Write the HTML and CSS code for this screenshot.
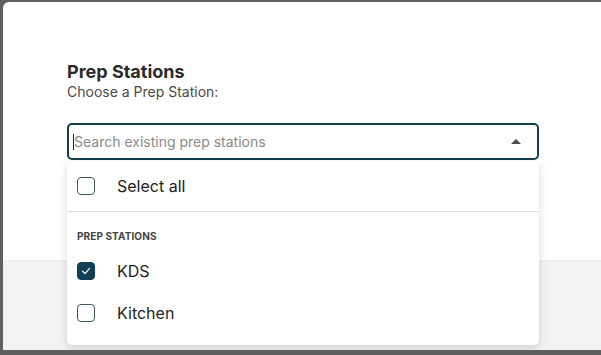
FILE: index.html
```html
<!DOCTYPE html>
<html lang="en">
<head>
  <meta charset="UTF-8" />
  <title>Prep Stations</title>
  <link rel="stylesheet" href="styles.css">
</head>
<body>
  <div id="modal">
    <div class="modal-body">
      <h2>Prep Stations</h2>
      <p class="subtitle">Choose a Prep Station:</p>

      <div class="select">
        <div class="select-input">
          <span class="caret"></span>
          <span class="placeholder">Search existing prep stations</span>
          <span class="arrow"></span>
        </div>

        <div class="dropdown">
          <div class="option select-all">
            <span class="checkbox"></span>
            <span class="label">Select all</span>
          </div>
          <div class="group-title">PREP STATIONS</div>
          <div class="option">
            <span class="checkbox checked">
              <svg width="12" height="12" viewBox="0 0 12 12"><path d="M2.5 6.2 L5 8.6 L9.6 3.4" fill="none" stroke="#fff" stroke-width="1.2" stroke-linecap="round" stroke-linejoin="round"/></svg>
            </span>
            <span class="label">KDS</span>
          </div>
          <div class="option">
            <span class="checkbox"></span>
            <span class="label">Kitchen</span>
          </div>
        </div>
      </div>
    </div>
    <div class="modal-footer"></div>
  </div>
</body>
</html>
```

FILE: styles.css
```css
body {
  margin: 0;
  background: #5f5f5f;
  font-family: Inter, "Noto Sans", sans-serif;
  color: #222;
  height: 355px;
  overflow: hidden;
}

#modal {
  margin: 2px 0 0 3px;
  width: 610px;
  height: 348px;
  background: white;
  border-top-left-radius: 6px;
  display: flex;
  flex-direction: column;
  overflow: hidden;
}

.modal-body {
  height: 258px;
  padding: 59px 0 0 64px;
  box-sizing: border-box;
}

.modal-footer {
  flex: 1;
  background: #f2f2f2;
  border-top: 1px solid #ebebeb;
}

h2 {
  margin: 0;
  font-size: 18px;
  font-weight: 700;
  color: #2b2b2b;
  line-height: 22px;
}

.subtitle {
  margin: 0;
  font-size: 14px;
  color: #4a4a4a;
  line-height: 18px;
}

.select {
  position: relative;
  margin-top: 22px;
  width: 472px;
}

.select-input {
  height: 37px;
  box-sizing: border-box;
  border: 2px solid #123f4e;
  border-radius: 5px;
  display: flex;
  align-items: center;
  padding: 0 16px 0 4px;
  background: white;
}

.caret {
  width: 1px;
  height: 16px;
  background: #222;
}

.placeholder {
  flex: 1;
  font-size: 14px;
  color: #8a8a8a;
}

.arrow {
  width: 0;
  height: 0;
  border-left: 5px solid transparent;
  border-right: 5px solid transparent;
  border-bottom: 5px solid #4a4a4a;
}

.dropdown {
  position: absolute;
  top: 38px;
  left: 0;
  right: 0;
  background: white;
  border-radius: 0 0 5px 5px;
  box-shadow: 0 3px 8px rgba(0,0,0,0.14);
  padding-bottom: 11px;
}

.option {
  display: flex;
  align-items: center;
  height: 42px;
  padding-left: 10px;
}

.select-all {
  height: 51px;
  border-bottom: 1px solid #dedede;
  box-sizing: border-box;
}

.checkbox {
  width: 18px;
  height: 18px;
  box-sizing: border-box;
  border: 1.5px solid #3e5763;
  border-radius: 4px;
  display: flex;
  align-items: center;
  justify-content: center;
}

.checkbox.checked {
  background: #123f55;
  border-color: #123f55;
}

.label {
  margin-left: 22px;
  font-size: 16px;
  color: #222;
}

.group-title {
  padding: 18px 0 8px 10px;
  font-size: 10px;
  font-weight: 700;
  color: #444;
  letter-spacing: 0.1px;
}
```
